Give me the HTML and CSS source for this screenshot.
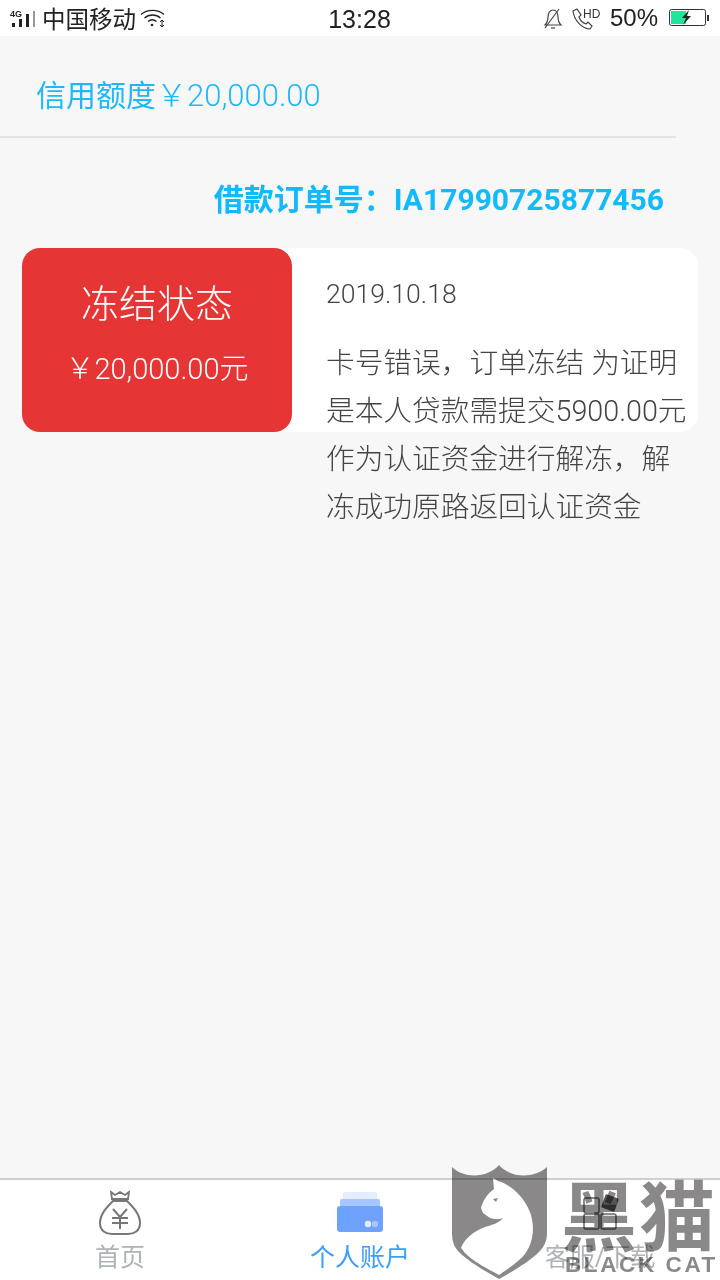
FILE: index.html
```html
<!DOCTYPE html>
<html lang="zh-CN">
<head>
    <meta charset="UTF-8">
    <meta name="viewport" content="width=device-width, initial-scale=1.0">
    <title>个人账户</title>
    <link rel="stylesheet" href="styles.css">
</head>
<body>
    <div class="status-bar">
        <div class="status-left">
            <svg width="28" height="20" viewBox="0 0 28 20">
                <text x="0" y="9" font-size="9" font-weight="700" font-family="Liberation Sans" fill="#222">4G</text>
                <rect x="2" y="15" width="3" height="4" fill="#222"/>
                <rect x="9" y="11" width="3" height="8" fill="#222"/>
                <rect x="16" y="6" width="3" height="13" fill="#222"/>
                <rect x="23" y="3" width="2" height="16" fill="#999"/>
            </svg>
            <span class="carrier">中国移动</span>
            <svg width="26" height="20" viewBox="0 0 26 20" fill="none" stroke="#222" stroke-width="1.4">
                <path d="M1 6.500C7 1 18 1 24 6.500"/>
                <path d="M4.500 10C9 6 16 6 20.500 10"/>
                <path d="M8 13.500C10.500 11.500 14 11.500 16.500 13.500"/>
                <circle cx="12" cy="17" r="1.300" fill="#222" stroke="none"/>
                <path d="M22 12v7M20 14l2-2 2 2M20 17l2 2 2-2" stroke-width="1"/>
            </svg>
        </div>
        <div class="status-time">13:28</div>
        <div class="status-right">
            <svg width="22" height="24" viewBox="0 0 22 24" fill="none" stroke="#444" stroke-width="1.200">
                <path d="M3 19c2-2 3-4 3-8 0-4 2-7 5-7s5 3 5 7c0 4 1 6 3 8z"/>
                <path d="M9 22h4"/>
                <path d="M3 22L17 3"/>
            </svg>
            <svg class="call" width="30" height="24" viewBox="0 0 30 24" fill="none" stroke="#444" stroke-width="1.200">
                <path d="M2 5l4-2 4 6-2 2c1 3 4 6 7 7l2-2 4 4-2 3c-8 0-16-9-17-18z"/>
                <text x="12" y="12" font-size="12" font-family="Liberation Sans" fill="#333" stroke="none">HD</text>
            </svg>
            <span class="battery-text">50%</span>
            <svg width="40" height="18" viewBox="0 0 40 18">
                <rect x="0.500" y="0.500" width="36" height="16" rx="2" fill="#fff" stroke="#333"/>
                <rect x="2" y="2" width="15" height="13" fill="#1ee59a"/>
                <path d="M20 1l-7 8h4l-3 7 8-9h-4z" fill="#222"/>
                <rect x="38" y="6" width="2" height="6" fill="#333"/>
            </svg>
        </div>
    </div>

    <div class="credit">信用额度<span class="credit-num">￥20,000.00</span></div>

    <div class="order-no">借款订单号：IA17990725877456</div>

    <div class="card">
        <div class="card-red">
            <div class="card-status">冻结状态</div>
            <div class="card-amount">￥20,000.00元</div>
        </div>
        <div class="card-info">
            <div class="card-date">2019.10.18</div>
            <div class="card-desc">卡号错误，订单冻结 为证明是本人贷款需提交5900.00元作为认证资金进行解冻，解冻成功原路返回认证资金</div>
        </div>
    </div>

    <div class="tabbar">
        <div class="tab">
            <svg width="44" height="46" viewBox="0 0 44 46" fill="none" stroke="#777" stroke-width="2">
                <path d="M13 2l4 3 5-3 5 3 4-3-1 7H14z" stroke-width="1.800"/>
                <path d="M15 11C9 17 2 24 2 33c0 8 6 11 12 11h16c6 0 12-3 12-11 0-9-7-16-13-22z"/>
                <path d="M15 19l7 8 7-8M14 28h16M14 33h16M22 27v12"/>
            </svg>
            <span>首页</span>
        </div>
        <div class="tab active">
            <svg width="46" height="46" viewBox="0 0 46 46">
                <rect x="6" y="2" width="34" height="12" rx="2" fill="#e3edff"/>
                <rect x="3" y="9" width="40" height="14" rx="2" fill="#a6c6ff"/>
                <rect x="0" y="16" width="46" height="26" rx="3" fill="#6ea2fc"/>
                <circle cx="31" cy="34" r="3.200" fill="#e3edff"/>
                <circle cx="38" cy="34" r="3.200" fill="#a6c6ff"/>
            </svg>
            <span>个人账户</span>
        </div>
        <div class="tab">
            <svg width="46" height="46" viewBox="0 0 46 46" fill="none" stroke="#666" stroke-width="1.500">
                <rect x="7" y="8" width="15" height="15" rx="2"/>
                <rect x="7" y="24" width="15" height="15" rx="2"/>
                <rect x="24" y="24" width="15" height="15" rx="2"/>
                <rect x="26" y="6" width="14" height="14" rx="1" fill="#555" stroke="none" transform="rotate(20 33 13)"/>
            </svg>
            <span>客服/下载</span>
        </div>
    </div>

    <div class="watermark">
        <svg width="100" height="116" viewBox="0 0 100 116">
            <path d="M2 2C14 14 38 13 49 0 60 13 84 14 97 2v66c0 8-3 14-8 19-10 10-26 19-40 27C35 106 19 97 9 87 4 82 2 76 2 68z" fill="#8a8889"/>
            <path d="M43 13l5 3C62 20 76 34 81 50 86 68 81 86 68 96 62 101 55 106 49 110 38 104 24 97 15 88L11 83C14 74 24 66 35 62 42 60 49 58 53 53 48 55 44 54 40 53L33 48 31 43C33 36 36 30 44 24z" fill="#fff"/>
            <path d="M43 34l5-1-2 4z" fill="#8a8889"/>
        </svg>
        <div class="wm-text">
            <div class="wm-cn">黑猫</div>
            <div class="wm-en">BLACK CAT</div>
        </div>
    </div>
</body>
</html>
```

FILE: styles.css
```css
* {
    box-sizing: border-box;
}
body {
    margin: 0;
    width: 720px;
    height: 1280px;
    position: relative;
    overflow: hidden;
    background-color: #f7f7f7;
    font-family: Roboto, "Noto Sans CJK SC", sans-serif;
    display: flex;
    flex-direction: column;
}
.status-bar {
    height: 36px;
    flex-shrink: 0;
    background-color: #fff;
    display: grid;
    grid-template-columns: 1fr auto 1fr;
    align-items: center;
    padding: 0 11px 0 10px;
    color: #222;
    font-size: 24px;
    font-family: "Liberation Sans", "Noto Sans CJK SC", sans-serif;
}
.status-left {
    display: flex;
    align-items: center;
    gap: 4px;
}
.status-right {
    display: flex;
    align-items: center;
    justify-content: flex-end;
}
.status-right .call {
    margin-left: 7px;
}
.carrier {
    font-size: 23.5px;
}
.status-time {
    font-size: 25px;
    margin-top: 2px;
}
.battery-text {
    margin: 0 11px 0 9px;
}
.credit {
    height: 102px;
    flex-shrink: 0;
    width: 676px;
    padding: 39px 0 0 36px;
    font-size: 30px;
    line-height: 42px;
    color: #1fb8f8;
    border-bottom: 2px solid #e3e3e3;
    font-weight: 400;
}
.credit-num {
    font-size: 31px;
    font-weight: 300;
}
.order-no {
    margin-top: 41px;
    padding-right: 56px;
    text-align: right;
    font-size: 30px;
    line-height: 42px;
    font-weight: 700;
    color: #12b9fb;
}
.card {
    margin: 27px 22px 0;
    height: 184px;
    flex-shrink: 0;
    background-color: #fff;
    border-radius: 18px;
    display: flex;
}
.card-red {
    width: 270px;
    flex-shrink: 0;
    background-color: #e63535;
    border-radius: 18px;
    color: #fff;
    text-align: center;
    font-weight: 300;
}
.card-status {
    margin-top: 31px;
    font-size: 38px;
    line-height: 50px;
}
.card-amount {
    margin-top: 19px;
    font-size: 29px;
    line-height: 42px;
}
.card-info {
    padding: 27px 1px 0 34px;
    color: #444;
    flex: 1;
    font-weight: 300;
}
.card-date {
    font-size: 26.6px;
    line-height: 38px;
}
.card-desc {
    margin-top: 26px;
    font-size: 28.7px;
    line-height: 48px;
}
.tabbar {
    position: absolute;
    left: 0;
    right: 0;
    bottom: 0;
    height: 102px;
    background-color: #fff;
    border-top: 2px solid #cfcfcf;
    display: flex;
    padding-top: 10px;
}
.tab {
    width: 240px;
    display: flex;
    flex-direction: column;
    align-items: center;
    color: #aeb3b5;
    font-size: 25px;
    line-height: 34px;
    gap: 5px;
}
.tab.active {
    color: #3a9eff;
}
/* watermark sits over the tab bar, blended so the page shows through */
.watermark {
    position: absolute;
    left: 450px;
    top: 1165px;
    display: flex;
    gap: 15px;
    mix-blend-mode: multiply;
    pointer-events: none;
}
.wm-text {
    color: #8a8889;
    font-family: "Noto Sans CJK SC", sans-serif;
    font-weight: 700;
}
.wm-cn {
    font-size: 76px;
    line-height: 76px;
    margin: 9px 0 0 -4px;
    letter-spacing: 2px;
    white-space: nowrap;
}
.wm-en {
    font-family: "Liberation Sans", sans-serif;
    font-weight: 700;
    font-size: 22.5px;
    line-height: 28px;
    margin-top: 1px;
    letter-spacing: 2.6px;
    white-space: nowrap;
}
```
